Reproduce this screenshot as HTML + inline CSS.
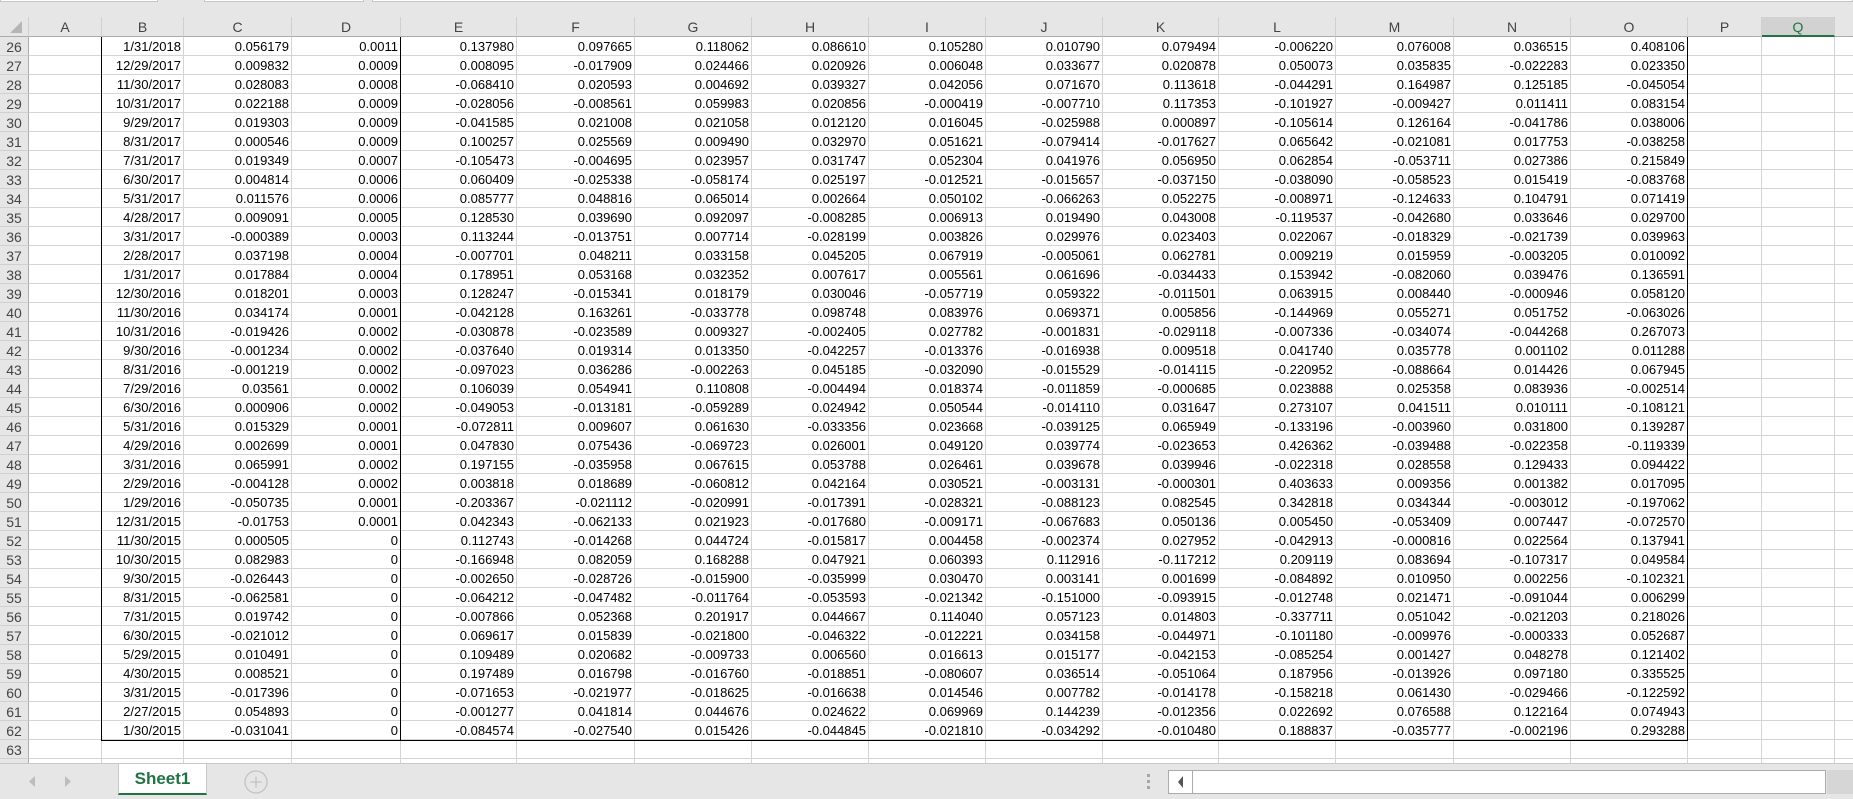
<!DOCTYPE html>
<html><head><meta charset="utf-8"><style>
*{margin:0;padding:0;box-sizing:border-box}
body{width:1853px;height:799px;overflow:hidden;background:#fff;font-family:"Liberation Sans",Arial,sans-serif;position:relative}
.top{position:absolute;left:0;top:0;width:1853px;height:17px;background:#e6e6e6}
.top i{position:absolute;top:0;height:2px;background:#fff;border:1px solid #c6c6c6;border-top:none}
.grid{position:absolute;left:0;top:17px;width:1853px}
.r{display:flex;height:19px;white-space:nowrap}
.r span{display:block;flex:none;height:19px;border-right:1px solid #d4d4d4;border-bottom:1px solid #d4d4d4;font-size:13px;line-height:20px;text-align:right;padding-right:2px;color:#000;overflow:hidden}
.r span:nth-child(1){width:29px;background:#e6e6e6;text-align:center;padding:0;color:#444;font-size:14px;border-right:1px solid #ababab;border-bottom:1px solid #d0d0d0}
.r span:nth-child(2){width:73px}.r span:nth-child(3){width:82px}.r span:nth-child(4){width:108px}.r span:nth-child(5){width:109px}
.r span:nth-child(6){width:116px}.r span:nth-child(7){width:118px}.r span:nth-child(8){width:117px}.r span:nth-child(9){width:117px}
.r span:nth-child(10){width:117px}.r span:nth-child(11){width:117px}.r span:nth-child(12){width:116px}.r span:nth-child(13){width:117px}
.r span:nth-child(14){width:118px}.r span:nth-child(15){width:117px}.r span:nth-child(16){width:117px}.r span:nth-child(17){width:74px}
.r span:nth-child(18){width:73px}.r span:nth-child(19){width:30px}
.h{height:20px}
.h span{height:20px !important;background:#e6e6e6;text-align:center !important;padding:0 !important;color:#444 !important;font-size:14px !important;line-height:21px !important;border-right:1px solid #d0d0d0 !important;border-bottom:1px solid #ababab !important}
.h span.sel{background:#d2d2d2;color:#217346 !important;border-bottom:2px solid #217346 !important}
.v{position:absolute;width:1px;background:#000;top:37px;height:704px}
.bar{position:absolute;left:0;top:763px;width:1853px;height:36px;background:#e6e6e6;border-top:1px solid #c8c8c8}
.tab{position:absolute;left:118px;top:0;width:89px;height:31px;background:#fff;border:1px solid #c8c8c8;border-top:none;border-bottom:2px solid #217346;color:#217346;font-weight:bold;font-size:17px;text-align:center;line-height:30px}
</style></head><body>
<div class="top"><i style="left:0;width:158px"></i><i style="left:204px;width:160px"></i><i style="left:372px;width:1481px"></i></div>
<div class="grid">
<div class="r h"><span style="background:#e6e6e6"><svg width="28" height="19" style="display:block"><polygon points="22,4 22,16 10,16" fill="#b5b5b5"/></svg></span><span>A</span><span>B</span><span>C</span><span>D</span><span>E</span><span>F</span><span>G</span><span>H</span><span>I</span><span>J</span><span>K</span><span>L</span><span>M</span><span>N</span><span>O</span><span>P</span><span class="sel">Q</span><span></span></div>
<div class="r"><span>26</span><span></span><span>1/31/2018</span><span>0.056179</span><span>0.0011</span><span>0.137980</span><span>0.097665</span><span>0.118062</span><span>0.086610</span><span>0.105280</span><span>0.010790</span><span>0.079494</span><span>-0.006220</span><span>0.076008</span><span>0.036515</span><span>0.408106</span><span></span><span></span><span></span></div>
<div class="r"><span>27</span><span></span><span>12/29/2017</span><span>0.009832</span><span>0.0009</span><span>0.008095</span><span>-0.017909</span><span>0.024466</span><span>0.020926</span><span>0.006048</span><span>0.033677</span><span>0.020878</span><span>0.050073</span><span>0.035835</span><span>-0.022283</span><span>0.023350</span><span></span><span></span><span></span></div>
<div class="r"><span>28</span><span></span><span>11/30/2017</span><span>0.028083</span><span>0.0008</span><span>-0.068410</span><span>0.020593</span><span>0.004692</span><span>0.039327</span><span>0.042056</span><span>0.071670</span><span>0.113618</span><span>-0.044291</span><span>0.164987</span><span>0.125185</span><span>-0.045054</span><span></span><span></span><span></span></div>
<div class="r"><span>29</span><span></span><span>10/31/2017</span><span>0.022188</span><span>0.0009</span><span>-0.028056</span><span>-0.008561</span><span>0.059983</span><span>0.020856</span><span>-0.000419</span><span>-0.007710</span><span>0.117353</span><span>-0.101927</span><span>-0.009427</span><span>0.011411</span><span>0.083154</span><span></span><span></span><span></span></div>
<div class="r"><span>30</span><span></span><span>9/29/2017</span><span>0.019303</span><span>0.0009</span><span>-0.041585</span><span>0.021008</span><span>0.021058</span><span>0.012120</span><span>0.016045</span><span>-0.025988</span><span>0.000897</span><span>-0.105614</span><span>0.126164</span><span>-0.041786</span><span>0.038006</span><span></span><span></span><span></span></div>
<div class="r"><span>31</span><span></span><span>8/31/2017</span><span>0.000546</span><span>0.0009</span><span>0.100257</span><span>0.025569</span><span>0.009490</span><span>0.032970</span><span>0.051621</span><span>-0.079414</span><span>-0.017627</span><span>0.065642</span><span>-0.021081</span><span>0.017753</span><span>-0.038258</span><span></span><span></span><span></span></div>
<div class="r"><span>32</span><span></span><span>7/31/2017</span><span>0.019349</span><span>0.0007</span><span>-0.105473</span><span>-0.004695</span><span>0.023957</span><span>0.031747</span><span>0.052304</span><span>0.041976</span><span>0.056950</span><span>0.062854</span><span>-0.053711</span><span>0.027386</span><span>0.215849</span><span></span><span></span><span></span></div>
<div class="r"><span>33</span><span></span><span>6/30/2017</span><span>0.004814</span><span>0.0006</span><span>0.060409</span><span>-0.025338</span><span>-0.058174</span><span>0.025197</span><span>-0.012521</span><span>-0.015657</span><span>-0.037150</span><span>-0.038090</span><span>-0.058523</span><span>0.015419</span><span>-0.083768</span><span></span><span></span><span></span></div>
<div class="r"><span>34</span><span></span><span>5/31/2017</span><span>0.011576</span><span>0.0006</span><span>0.085777</span><span>0.048816</span><span>0.065014</span><span>0.002664</span><span>0.050102</span><span>-0.066263</span><span>0.052275</span><span>-0.008971</span><span>-0.124633</span><span>0.104791</span><span>0.071419</span><span></span><span></span><span></span></div>
<div class="r"><span>35</span><span></span><span>4/28/2017</span><span>0.009091</span><span>0.0005</span><span>0.128530</span><span>0.039690</span><span>0.092097</span><span>-0.008285</span><span>0.006913</span><span>0.019490</span><span>0.043008</span><span>-0.119537</span><span>-0.042680</span><span>0.033646</span><span>0.029700</span><span></span><span></span><span></span></div>
<div class="r"><span>36</span><span></span><span>3/31/2017</span><span>-0.000389</span><span>0.0003</span><span>0.113244</span><span>-0.013751</span><span>0.007714</span><span>-0.028199</span><span>0.003826</span><span>0.029976</span><span>0.023403</span><span>0.022067</span><span>-0.018329</span><span>-0.021739</span><span>0.039963</span><span></span><span></span><span></span></div>
<div class="r"><span>37</span><span></span><span>2/28/2017</span><span>0.037198</span><span>0.0004</span><span>-0.007701</span><span>0.048211</span><span>0.033158</span><span>0.045205</span><span>0.067919</span><span>-0.005061</span><span>0.062781</span><span>0.009219</span><span>0.015959</span><span>-0.003205</span><span>0.010092</span><span></span><span></span><span></span></div>
<div class="r"><span>38</span><span></span><span>1/31/2017</span><span>0.017884</span><span>0.0004</span><span>0.178951</span><span>0.053168</span><span>0.032352</span><span>0.007617</span><span>0.005561</span><span>0.061696</span><span>-0.034433</span><span>0.153942</span><span>-0.082060</span><span>0.039476</span><span>0.136591</span><span></span><span></span><span></span></div>
<div class="r"><span>39</span><span></span><span>12/30/2016</span><span>0.018201</span><span>0.0003</span><span>0.128247</span><span>-0.015341</span><span>0.018179</span><span>0.030046</span><span>-0.057719</span><span>0.059322</span><span>-0.011501</span><span>0.063915</span><span>0.008440</span><span>-0.000946</span><span>0.058120</span><span></span><span></span><span></span></div>
<div class="r"><span>40</span><span></span><span>11/30/2016</span><span>0.034174</span><span>0.0001</span><span>-0.042128</span><span>0.163261</span><span>-0.033778</span><span>0.098748</span><span>0.083976</span><span>0.069371</span><span>0.005856</span><span>-0.144969</span><span>0.055271</span><span>0.051752</span><span>-0.063026</span><span></span><span></span><span></span></div>
<div class="r"><span>41</span><span></span><span>10/31/2016</span><span>-0.019426</span><span>0.0002</span><span>-0.030878</span><span>-0.023589</span><span>0.009327</span><span>-0.002405</span><span>0.027782</span><span>-0.001831</span><span>-0.029118</span><span>-0.007336</span><span>-0.034074</span><span>-0.044268</span><span>0.267073</span><span></span><span></span><span></span></div>
<div class="r"><span>42</span><span></span><span>9/30/2016</span><span>-0.001234</span><span>0.0002</span><span>-0.037640</span><span>0.019314</span><span>0.013350</span><span>-0.042257</span><span>-0.013376</span><span>-0.016938</span><span>0.009518</span><span>0.041740</span><span>0.035778</span><span>0.001102</span><span>0.011288</span><span></span><span></span><span></span></div>
<div class="r"><span>43</span><span></span><span>8/31/2016</span><span>-0.001219</span><span>0.0002</span><span>-0.097023</span><span>0.036286</span><span>-0.002263</span><span>0.045185</span><span>-0.032090</span><span>-0.015529</span><span>-0.014115</span><span>-0.220952</span><span>-0.088664</span><span>0.014426</span><span>0.067945</span><span></span><span></span><span></span></div>
<div class="r"><span>44</span><span></span><span>7/29/2016</span><span>0.03561</span><span>0.0002</span><span>0.106039</span><span>0.054941</span><span>0.110808</span><span>-0.004494</span><span>0.018374</span><span>-0.011859</span><span>-0.000685</span><span>0.023888</span><span>0.025358</span><span>0.083936</span><span>-0.002514</span><span></span><span></span><span></span></div>
<div class="r"><span>45</span><span></span><span>6/30/2016</span><span>0.000906</span><span>0.0002</span><span>-0.049053</span><span>-0.013181</span><span>-0.059289</span><span>0.024942</span><span>0.050544</span><span>-0.014110</span><span>0.031647</span><span>0.273107</span><span>0.041511</span><span>0.010111</span><span>-0.108121</span><span></span><span></span><span></span></div>
<div class="r"><span>46</span><span></span><span>5/31/2016</span><span>0.015329</span><span>0.0001</span><span>-0.072811</span><span>0.009607</span><span>0.061630</span><span>-0.033356</span><span>0.023668</span><span>-0.039125</span><span>0.065949</span><span>-0.133196</span><span>-0.003960</span><span>0.031800</span><span>0.139287</span><span></span><span></span><span></span></div>
<div class="r"><span>47</span><span></span><span>4/29/2016</span><span>0.002699</span><span>0.0001</span><span>0.047830</span><span>0.075436</span><span>-0.069723</span><span>0.026001</span><span>0.049120</span><span>0.039774</span><span>-0.023653</span><span>0.426362</span><span>-0.039488</span><span>-0.022358</span><span>-0.119339</span><span></span><span></span><span></span></div>
<div class="r"><span>48</span><span></span><span>3/31/2016</span><span>0.065991</span><span>0.0002</span><span>0.197155</span><span>-0.035958</span><span>0.067615</span><span>0.053788</span><span>0.026461</span><span>0.039678</span><span>0.039946</span><span>-0.022318</span><span>0.028558</span><span>0.129433</span><span>0.094422</span><span></span><span></span><span></span></div>
<div class="r"><span>49</span><span></span><span>2/29/2016</span><span>-0.004128</span><span>0.0002</span><span>0.003818</span><span>0.018689</span><span>-0.060812</span><span>0.042164</span><span>0.030521</span><span>-0.003131</span><span>-0.000301</span><span>0.403633</span><span>0.009356</span><span>0.001382</span><span>0.017095</span><span></span><span></span><span></span></div>
<div class="r"><span>50</span><span></span><span>1/29/2016</span><span>-0.050735</span><span>0.0001</span><span>-0.203367</span><span>-0.021112</span><span>-0.020991</span><span>-0.017391</span><span>-0.028321</span><span>-0.088123</span><span>0.082545</span><span>0.342818</span><span>0.034344</span><span>-0.003012</span><span>-0.197062</span><span></span><span></span><span></span></div>
<div class="r"><span>51</span><span></span><span>12/31/2015</span><span>-0.01753</span><span>0.0001</span><span>0.042343</span><span>-0.062133</span><span>0.021923</span><span>-0.017680</span><span>-0.009171</span><span>-0.067683</span><span>0.050136</span><span>0.005450</span><span>-0.053409</span><span>0.007447</span><span>-0.072570</span><span></span><span></span><span></span></div>
<div class="r"><span>52</span><span></span><span>11/30/2015</span><span>0.000505</span><span>0</span><span>0.112743</span><span>-0.014268</span><span>0.044724</span><span>-0.015817</span><span>0.004458</span><span>-0.002374</span><span>0.027952</span><span>-0.042913</span><span>-0.000816</span><span>0.022564</span><span>0.137941</span><span></span><span></span><span></span></div>
<div class="r"><span>53</span><span></span><span>10/30/2015</span><span>0.082983</span><span>0</span><span>-0.166948</span><span>0.082059</span><span>0.168288</span><span>0.047921</span><span>0.060393</span><span>0.112916</span><span>-0.117212</span><span>0.209119</span><span>0.083694</span><span>-0.107317</span><span>0.049584</span><span></span><span></span><span></span></div>
<div class="r"><span>54</span><span></span><span>9/30/2015</span><span>-0.026443</span><span>0</span><span>-0.002650</span><span>-0.028726</span><span>-0.015900</span><span>-0.035999</span><span>0.030470</span><span>0.003141</span><span>0.001699</span><span>-0.084892</span><span>0.010950</span><span>0.002256</span><span>-0.102321</span><span></span><span></span><span></span></div>
<div class="r"><span>55</span><span></span><span>8/31/2015</span><span>-0.062581</span><span>0</span><span>-0.064212</span><span>-0.047482</span><span>-0.011764</span><span>-0.053593</span><span>-0.021342</span><span>-0.151000</span><span>-0.093915</span><span>-0.012748</span><span>0.021471</span><span>-0.091044</span><span>0.006299</span><span></span><span></span><span></span></div>
<div class="r"><span>56</span><span></span><span>7/31/2015</span><span>0.019742</span><span>0</span><span>-0.007866</span><span>0.052368</span><span>0.201917</span><span>0.044667</span><span>0.114040</span><span>0.057123</span><span>0.014803</span><span>-0.337711</span><span>0.051042</span><span>-0.021203</span><span>0.218026</span><span></span><span></span><span></span></div>
<div class="r"><span>57</span><span></span><span>6/30/2015</span><span>-0.021012</span><span>0</span><span>0.069617</span><span>0.015839</span><span>-0.021800</span><span>-0.046322</span><span>-0.012221</span><span>0.034158</span><span>-0.044971</span><span>-0.101180</span><span>-0.009976</span><span>-0.000333</span><span>0.052687</span><span></span><span></span><span></span></div>
<div class="r"><span>58</span><span></span><span>5/29/2015</span><span>0.010491</span><span>0</span><span>0.109489</span><span>0.020682</span><span>-0.009733</span><span>0.006560</span><span>0.016613</span><span>0.015177</span><span>-0.042153</span><span>-0.085254</span><span>0.001427</span><span>0.048278</span><span>0.121402</span><span></span><span></span><span></span></div>
<div class="r"><span>59</span><span></span><span>4/30/2015</span><span>0.008521</span><span>0</span><span>0.197489</span><span>0.016798</span><span>-0.016760</span><span>-0.018851</span><span>-0.080607</span><span>0.036514</span><span>-0.051064</span><span>0.187956</span><span>-0.013926</span><span>0.097180</span><span>0.335525</span><span></span><span></span><span></span></div>
<div class="r"><span>60</span><span></span><span>3/31/2015</span><span>-0.017396</span><span>0</span><span>-0.071653</span><span>-0.021977</span><span>-0.018625</span><span>-0.016638</span><span>0.014546</span><span>0.007782</span><span>-0.014178</span><span>-0.158218</span><span>0.061430</span><span>-0.029466</span><span>-0.122592</span><span></span><span></span><span></span></div>
<div class="r"><span>61</span><span></span><span>2/27/2015</span><span>0.054893</span><span>0</span><span>-0.001277</span><span>0.041814</span><span>0.044676</span><span>0.024622</span><span>0.069969</span><span>0.144239</span><span>-0.012356</span><span>0.022692</span><span>0.076588</span><span>0.122164</span><span>0.074943</span><span></span><span></span><span></span></div>
<div class="r"><span>62</span><span></span><span>1/30/2015</span><span>-0.031041</span><span>0</span><span>-0.084574</span><span>-0.027540</span><span>0.015426</span><span>-0.044845</span><span>-0.021810</span><span>-0.034292</span><span>-0.010480</span><span>0.188837</span><span>-0.035777</span><span>-0.002196</span><span>0.293288</span><span></span><span></span><span></span></div>
<div class="r"><span>63</span><span></span><span></span><span></span><span></span><span></span><span></span><span></span><span></span><span></span><span></span><span></span><span></span><span></span><span></span><span></span><span></span><span></span><span></span></div>
<div class="r"><span></span><span></span><span></span><span></span><span></span><span></span><span></span><span></span><span></span><span></span><span></span><span></span><span></span><span></span><span></span><span></span><span></span><span></span><span></span></div>
</div>
<div class="v" style="left:101px"></div>
<div class="v" style="left:400px"></div>
<div class="v" style="left:1687px"></div>
<div style="position:absolute;left:101px;top:740px;width:1587px;height:1px;background:#000"></div>
<div class="bar">
<svg width="90" height="34" style="position:absolute;left:20px;top:0"><polygon points="15,12 15,23 9,17.5" fill="#bdbdbd"/><polygon points="45,12 45,23 51,17.5" fill="#bdbdbd"/></svg>
<div class="tab">Sheet1</div>
<svg width="26" height="26" style="position:absolute;left:243px;top:5px"><circle cx="13" cy="13" r="11" fill="none" stroke="#c3c3c3" stroke-width="1.3"/><path d="M13 7.5V18.5M7.5 13H18.5" stroke="#c3c3c3" stroke-width="1.3"/></svg>
<div style="position:absolute;left:1147px;top:10px;width:3px;height:3px;background:#a6a6a6;box-shadow:0 6px 0 #a6a6a6,0 12px 0 #a6a6a6"></div>
<div style="position:absolute;left:1168px;top:6px;width:658px;height:24px;background:#fff;border:1px solid #ababab"></div>
<div style="position:absolute;left:1168px;top:6px;width:25px;height:24px;border:1px solid #ababab;background:#fff"><svg width="23" height="22"><polygon points="14,5 14,17 9,11" fill="#555"/></svg></div>
<div style="position:absolute;left:1827px;top:6px;width:26px;height:24px;background:#d6d6d6"></div>
</div>
</body></html>
